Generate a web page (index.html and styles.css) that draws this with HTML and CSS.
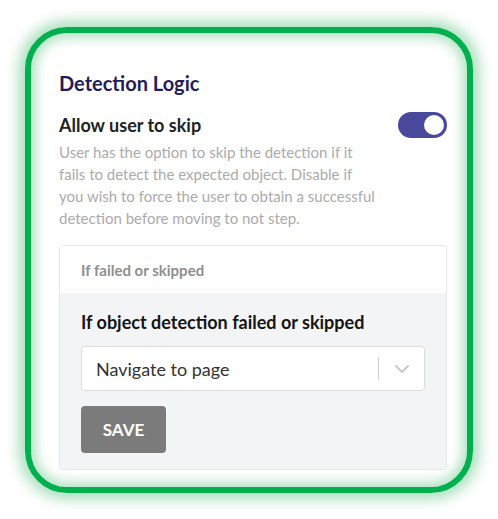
FILE: index.html
```html
<!DOCTYPE html>
<html>
<head>
<meta charset="utf-8">
<link rel="stylesheet" href="styles.css">
</head>
<body>
<div class="page">
  <div class="frame">
    <h2 class="title">Detection Logic</h2>
    <div class="skip-row">
      <span class="skip-label">Allow user to skip</span>
      <span class="toggle"><span class="knob"></span></span>
    </div>
    <p class="desc">User has the option to skip the detection if it<br>fails to detect the expected object. Disable if<br>you wish to force the user to obtain a successful<br>detection before moving to not step.</p>
    <div class="card">
      <div class="card-head">If failed or skipped</div>
      <div class="card-body">
        <div class="field-label">If object detection failed or skipped</div>
        <div class="select">
          <span class="select-value">Navigate to page</span>
          <span class="select-sep"></span>
          <svg class="chev" width="16" height="10" viewBox="0 0 16 10"><path d="M2 2 L8 8 L14 2" fill="none" stroke="#c8c8c8" stroke-width="2" stroke-linecap="round" stroke-linejoin="round"/></svg>
        </div>
        <button class="save">SAVE</button>
      </div>
    </div>
  </div>
</div>
</body>
</html>
```

FILE: styles.css
```css
html, body {
  margin: 0;
  padding: 0;
  background: #ffffff;
}
body {
  font-family: "Lato", "Open Sans", sans-serif;
}
.page {
  width: 498px;
  height: 519px;
  padding: 27px 0 0 25px;
  box-sizing: border-box;
}
.frame {
  width: 448px;
  height: 466px;
  box-sizing: border-box;
  border: 6px solid #00b04f;
  border-radius: 42px;
  box-shadow: 0 0 14px 6px rgba(0, 160, 60, 0.35), inset 0 0 12px 5px rgba(0, 160, 60, 0.3);
  padding: 38px 20px 17px 28px;
  display: flex;
  flex-direction: column;
}
.title {
  margin: 0;
  font-size: 20px;
  line-height: 24px;
  font-weight: 700;
  color: #1f1d5c;
}
.skip-row {
  margin-top: 17px;
  height: 26px;
  display: flex;
  align-items: center;
  justify-content: space-between;
}
.skip-label {
  font-size: 18px;
  font-weight: 700;
  color: #222222;
}
.toggle {
  width: 49px;
  height: 26px;
  border-radius: 13px;
  background: #4a489c;
  display: flex;
  align-items: center;
  justify-content: flex-end;
  padding-right: 3px;
  box-sizing: border-box;
}
.knob {
  width: 20px;
  height: 20px;
  border-radius: 50%;
  background: #ffffff;
}
.desc {
  margin: 3px 0 0 0;
  font-size: 15px;
  line-height: 22px;
  color: #ababab;
}
.card {
  margin-top: 16px;
  border: 1px solid #e6e6e6;
  border-radius: 4px;
  overflow: hidden;
  flex: 1;
  display: flex;
  flex-direction: column;
}
.card-head {
  height: 47px;
  padding-left: 21px;
  display: flex;
  align-items: center;
  font-size: 15px;
  font-weight: 700;
  color: #8f8f8f;
  background: #ffffff;
}
.card-body {
  flex: 1;
  background: #f3f4f6;
  padding: 17px 21px 0 21px;
}
.field-label {
  font-size: 18px;
  line-height: 24px;
  font-weight: 700;
  color: #151515;
}
.select {
  margin-top: 12px;
  height: 45px;
  box-sizing: border-box;
  background: #ffffff;
  border: 1px solid #dcdcdc;
  border-radius: 4px;
  display: flex;
  align-items: center;
  padding-left: 14px;
}
.select-value {
  flex: 1;
  font-size: 18px;
  color: #333333;
}
.select-sep {
  width: 1px;
  height: 23px;
  background: #cccccc;
}
.chev {
  margin: 0 14px 0 15px;
}
.save {
  margin-top: 15px;
  width: 85px;
  height: 47px;
  border: none;
  border-radius: 4px;
  background: #7b7b7b;
  color: #ffffff;
  font-family: "Lato", "Open Sans", sans-serif;
  font-size: 17px;
  font-weight: 700;
  display: flex;
  align-items: center;
  justify-content: center;
  padding: 0;
}
```
